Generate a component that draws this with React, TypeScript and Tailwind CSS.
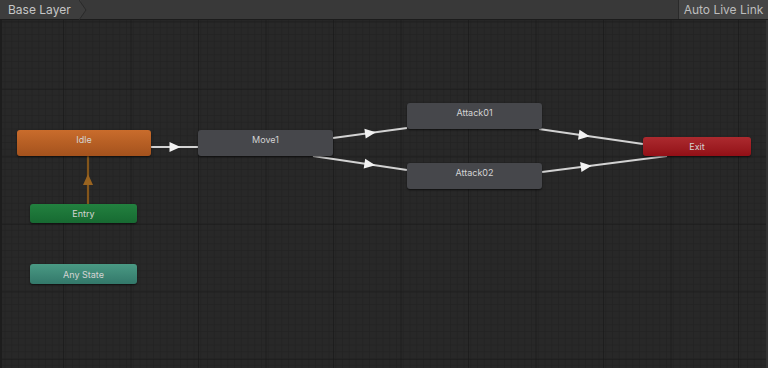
import React from "react";

type StateNode = {
  name: string;
  x: number;
  y: number;
  w: number;
  h: number;
  cls: string;
  textTop?: boolean;
};

// positions are relative to the canvas (which starts 20px below the page top)
const nodes: StateNode[] = [
  { name: "Idle", x: 17, y: 110, w: 134, h: 26, cls: "bg-gradient-to-b from-[#c96c2c] to-[#a4521d]", textTop: true },
  { name: "Move1", x: 198, y: 110, w: 135, h: 26, cls: "bg-[#46474b]", textTop: true },
  { name: "Attack01", x: 407, y: 83, w: 135, h: 26, cls: "bg-[#46474b]", textTop: true },
  { name: "Attack02", x: 407, y: 143, w: 135, h: 26, cls: "bg-[#46474b]", textTop: true },
  { name: "Exit", x: 643, y: 117, w: 108, h: 19, cls: "bg-gradient-to-b from-[#ac2a2f] to-[#920f16]" },
  { name: "Entry", x: 30, y: 184, w: 107, h: 19, cls: "bg-gradient-to-b from-[#22813f] to-[#176a32]" },
  { name: "Any State", x: 30, y: 244, w: 107, h: 20, cls: "bg-gradient-to-b from-[#4a9a84] to-[#33786a]" },
];

// t = where the arrow head sits along the line (0..1)
type Link = { x1: number; y1: number; x2: number; y2: number; t: number; orange?: boolean };

const links: Link[] = [
  { x1: 151, y1: 127, x2: 198, y2: 127, t: 0.5 },
  { x1: 333, y1: 118, x2: 407, y2: 108, t: 0.5 },
  { x1: 313, y1: 136, x2: 407, y2: 150, t: 0.6 },
  { x1: 539, y1: 109, x2: 643, y2: 124, t: 0.43 },
  { x1: 542, y1: 152, x2: 667, y2: 136, t: 0.35 },
  { x1: 88, y1: 184, x2: 88, y2: 136, t: 0.5, orange: true },
];

function Arrow({ l }: { l: Link }) {
  const mx = l.x1 + (l.x2 - l.x1) * l.t;
  const my = l.y1 + (l.y2 - l.y1) * l.t;
  const ang = (Math.atan2(l.y2 - l.y1, l.x2 - l.x1) * 180) / Math.PI;
  return (
    <g>
      <line x1={l.x1} y1={l.y1} x2={l.x2} y2={l.y2} stroke={l.orange ? "#84561b" : "#d2d2d2"} strokeWidth={2.2} />
      <polygon
        points="-5,-5 6,0 -5,5"
        fill={l.orange ? "#9a6420" : "#f2f2f2"}
        transform={`translate(${mx} ${my}) rotate(${ang})`}
      />
    </g>
  );
}

export default function App() {
  return (
    <div
      className="flex h-[368px] w-[768px] flex-col overflow-hidden bg-[#262626] text-[#c4c4c4]"
      style={{ fontFamily: "Inter, 'Liberation Sans', sans-serif" }}
    >
      <div className="flex h-[20px] shrink-0 items-stretch border-b border-[#1c1c1c] bg-[#393939]">
        <div className="relative flex items-center bg-[#3d3d3d] pl-[8px] pr-[10px] text-[12px] leading-none text-[#c6c6c6]">
          Base Layer
          <svg className="absolute -right-[6px] top-0 h-[20px] w-[8px]" viewBox="0 0 8 20">
            <path d="M0 0 L7 10 L0 20 Z" fill="#3d3d3d" />
            <path d="M0 0 L7 10 L0 20" fill="none" stroke="#2a2a2a" strokeWidth="1" />
          </svg>
        </div>
        <div className="flex-1" />
        <div className="flex w-[90px] items-center justify-center border-l border-[#2a2a2a] bg-[#454545] text-[12px] leading-none text-[#bdbdbd]">
          Auto Live Link
        </div>
      </div>

      <div className="relative flex-1">
        <svg className="absolute inset-0 h-full w-full">
          <defs>
            <pattern id="minor" x="-1.25" y="-5.25" width="6.75" height="6.75" patternUnits="userSpaceOnUse">
              <path d="M6.75 0 L6.75 6.75 M0 6.75 L6.75 6.75" stroke="#202020" strokeWidth="1" fill="none" />
            </pattern>
            <pattern id="major" x="-4.5" y="1.5" width="67.5" height="67.5" patternUnits="userSpaceOnUse">
              <path d="M0 0 L0 67.5 M0 0 L67.5 0" stroke="#171717" strokeWidth="1.2" fill="none" />
            </pattern>
          </defs>
          <rect width="100%" height="100%" fill="#282828" />
          <rect width="100%" height="100%" fill="url(#minor)" />
          <rect width="100%" height="100%" fill="url(#major)" />
          <rect x="0" y="0" width="2" height="100%" fill="#1d1d1d" />
          {links.map((l, i) => (
            <Arrow key={i} l={l} />
          ))}
        </svg>

        {nodes.map((n) => (
          <div
            key={n.name}
            className={`absolute flex justify-center rounded-[3px] text-[9px] leading-none text-[#d4d4d4] shadow-[0_1px_2px_rgba(0,0,0,0.6)] ${n.cls} ${
              n.textTop ? "items-start pt-[5px]" : "items-center"
            }`}
            style={{ left: n.x, top: n.y, width: n.w, height: n.h }}
          >
            {n.name}
          </div>
        ))}
        <div className="absolute right-0 top-0 h-full w-[2px] bg-[#333]" />
      </div>
    </div>
  );
}
